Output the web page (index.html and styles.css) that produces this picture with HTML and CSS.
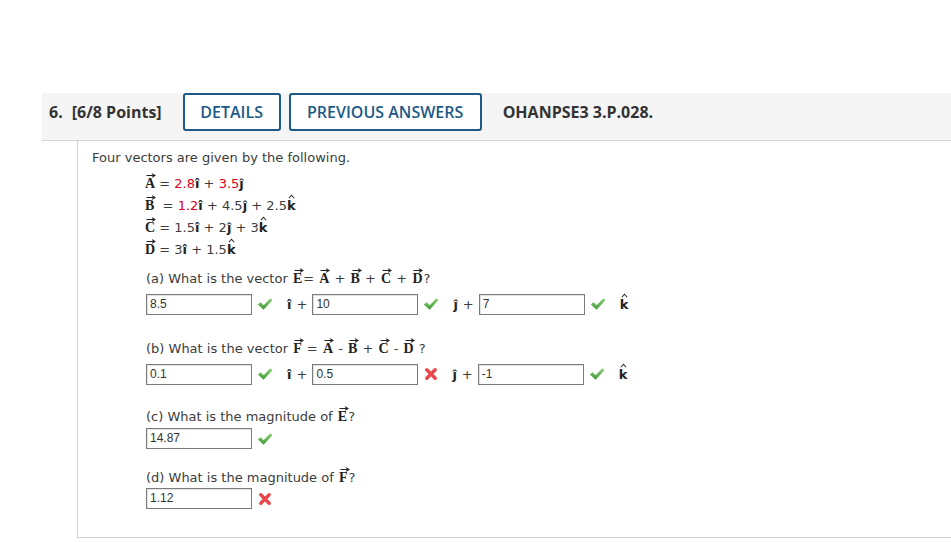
FILE: index.html
```
<!DOCTYPE html>
<html>
<head>
<meta charset="utf-8">
<link rel="stylesheet" href="styles.css">
</head>
<body>
<div class="page">
  <div class="qhead">
    <span class="qnum">6.</span>
    <span class="pts">[6/8 Points]</span>
    <span class="btn btn-details">DETAILS</span>
    <span class="btn btn-prev">PREVIOUS ANSWERS</span>
    <span class="code">OHANPSE3 3.P.028.</span>
  </div>
  <div class="qbody">
    <p class="intro">Four vectors are given by the following.</p>
    <div class="vecs">
      <div class="vline"><span class="vec">A<svg class="arr" viewBox="0 0 10 5"><path d="M0.5 2.5H8.5M6 0.6L9 2.5L6 4.4" /></svg></span> = <span class="red">2.8</span><b class="u">î</b> + <span class="red">3.5</span><b class="u">ĵ</b></div>
      <div class="vline"><span class="vec">B<svg class="arr" viewBox="0 0 10 5"><path d="M0.5 2.5H8.5M6 0.6L9 2.5L6 4.4" /></svg></span>&nbsp; = <span class="red">1.2</span><b class="u">î</b> + 4.5<b class="u">ĵ</b> + 2.5<b class="u kh">k<svg class="hat" viewBox="0 0 8 5"><path d="M1 4.5L4 1L7 4.5" /></svg></b></div>
      <div class="vline"><span class="vec">C<svg class="arr" viewBox="0 0 10 5"><path d="M0.5 2.5H8.5M6 0.6L9 2.5L6 4.4" /></svg></span> = 1.5<b class="u">î</b> + 2<b class="u">ĵ</b> + 3<b class="u kh">k<svg class="hat" viewBox="0 0 8 5"><path d="M1 4.5L4 1L7 4.5" /></svg></b></div>
      <div class="vline"><span class="vec">D<svg class="arr" viewBox="0 0 10 5"><path d="M0.5 2.5H8.5M6 0.6L9 2.5L6 4.4" /></svg></span> = 3<b class="u">î</b> + 1.5<b class="u kh">k<svg class="hat" viewBox="0 0 8 5"><path d="M1 4.5L4 1L7 4.5" /></svg></b></div>
    </div>

    <p class="q qa">(a) What is the vector <span class="vec">E<svg class="arr" viewBox="0 0 10 5"><path d="M0.5 2.5H8.5M6 0.6L9 2.5L6 4.4" /></svg></span>= <span class="vec">A<svg class="arr" viewBox="0 0 10 5"><path d="M0.5 2.5H8.5M6 0.6L9 2.5L6 4.4" /></svg></span> + <span class="vec">B<svg class="arr" viewBox="0 0 10 5"><path d="M0.5 2.5H8.5M6 0.6L9 2.5L6 4.4" /></svg></span> + <span class="vec">C<svg class="arr" viewBox="0 0 10 5"><path d="M0.5 2.5H8.5M6 0.6L9 2.5L6 4.4" /></svg></span> + <span class="vec">D<svg class="arr" viewBox="0 0 10 5"><path d="M0.5 2.5H8.5M6 0.6L9 2.5L6 4.4" /></svg></span>?</p>
    <div class="row row-a">
      <span class="inp">8.5</span>
      <svg class="ok" viewBox="0 0 16 14"><defs><linearGradient id="g1" x1="0" y1="0" x2="0" y2="1"><stop offset="0" stop-color="#8fd07c"/><stop offset="1" stop-color="#3f9a35"/></linearGradient></defs><path d="M0.8 7.6L3.6 5.2L6.6 8.2L13.3 1.2L15.4 3.2L6.6 12.8Z" fill="url(#g1)"/></svg>
      <span class="unit">î</span><span class="plus">+</span>
      <span class="inp">10</span>
      <svg class="ok" viewBox="0 0 16 14"><path d="M0.8 7.6L3.6 5.2L6.6 8.2L13.3 1.2L15.4 3.2L6.6 12.8Z" fill="url(#g1)"/></svg>
      <span class="unit">ĵ</span><span class="plus">+</span>
      <span class="inp">7</span>
      <svg class="ok" viewBox="0 0 16 14"><path d="M0.8 7.6L3.6 5.2L6.6 8.2L13.3 1.2L15.4 3.2L6.6 12.8Z" fill="url(#g1)"/></svg>
      <span class="unit kh">k<svg class="hat" viewBox="0 0 8 5"><path d="M1 4.5L4 1L7 4.5" /></svg></span>
    </div>

    <p class="q qb">(b) What is the vector <span class="vec">F<svg class="arr" viewBox="0 0 10 5"><path d="M0.5 2.5H8.5M6 0.6L9 2.5L6 4.4" /></svg></span> = <span class="vec">A<svg class="arr" viewBox="0 0 10 5"><path d="M0.5 2.5H8.5M6 0.6L9 2.5L6 4.4" /></svg></span> - <span class="vec">B<svg class="arr" viewBox="0 0 10 5"><path d="M0.5 2.5H8.5M6 0.6L9 2.5L6 4.4" /></svg></span> + <span class="vec">C<svg class="arr" viewBox="0 0 10 5"><path d="M0.5 2.5H8.5M6 0.6L9 2.5L6 4.4" /></svg></span> - <span class="vec">D<svg class="arr" viewBox="0 0 10 5"><path d="M0.5 2.5H8.5M6 0.6L9 2.5L6 4.4" /></svg></span> ?</p>
    <div class="row row-b">
      <span class="inp">0.1</span>
      <svg class="ok" viewBox="0 0 16 14"><path d="M0.8 7.6L3.6 5.2L6.6 8.2L13.3 1.2L15.4 3.2L6.6 12.8Z" fill="url(#g1)"/></svg>
      <span class="unit">î</span><span class="plus">+</span>
      <span class="inp">0.5</span>
      <svg class="bad" viewBox="0 0 14 14"><path d="M2.8 2.8L11.2 11.2M11.2 2.8L2.8 11.2"/></svg>
      <span class="unit">ĵ</span><span class="plus">+</span>
      <span class="inp">-1</span>
      <svg class="ok" viewBox="0 0 16 14"><path d="M0.8 7.6L3.6 5.2L6.6 8.2L13.3 1.2L15.4 3.2L6.6 12.8Z" fill="url(#g1)"/></svg>
      <span class="unit kh">k<svg class="hat" viewBox="0 0 8 5"><path d="M1 4.5L4 1L7 4.5" /></svg></span>
    </div>

    <p class="q qc">(c) What is the magnitude of <span class="vec">E<svg class="arr" viewBox="0 0 10 5"><path d="M0.5 2.5H8.5M6 0.6L9 2.5L6 4.4" /></svg></span>?</p>
    <div class="row row-c">
      <span class="inp">14.87</span>
      <svg class="ok" viewBox="0 0 16 14"><path d="M0.8 7.6L3.6 5.2L6.6 8.2L13.3 1.2L15.4 3.2L6.6 12.8Z" fill="url(#g1)"/></svg>
    </div>

    <p class="q qd">(d) What is the magnitude of <span class="vec">F<svg class="arr" viewBox="0 0 10 5"><path d="M0.5 2.5H8.5M6 0.6L9 2.5L6 4.4" /></svg></span>?</p>
    <div class="row row-d">
      <span class="inp">1.12</span>
      <svg class="bad" viewBox="0 0 14 14"><path d="M2.8 2.8L11.2 11.2M11.2 2.8L2.8 11.2"/></svg>
    </div>
  </div>
</div>
</body>
</html>
```

FILE: styles.css
```
* { box-sizing: border-box; }
html, body { margin: 0; padding: 0; background: #fff; }
body { width: 951px; height: 542px; overflow: hidden; }

.page { padding-top: 93px; padding-left: 42px; }

.qhead {
  height: 48px;
  background: #f5f5f5;
  border-bottom: 1px solid #d6d6d6;
  display: flex;
  align-items: flex-start;
  font-family: "Open Sans", sans-serif;
  font-weight: 700;
  font-size: 16px;
  color: #333;
}
.qnum { margin-left: 7px; margin-top: 8px; line-height: 22px; }
.pts { margin-left: 9px; margin-top: 8px; line-height: 22px; }
.btn {
  height: 38px;
  border: 2px solid #1d5a88;
  border-radius: 3px;
  background: #fff;
  color: #1d5a88;
  font-weight: 600;
  display: flex;
  align-items: center;
  justify-content: center;
  padding: 0;
}
.btn-details { margin-left: 21px; width: 98px; }
.btn-prev { margin-left: 8px; width: 193px; }
.code { margin-left: 21px; margin-top: 8px; line-height: 22px; }

.qbody {
  margin-left: 35px;
  height: 397px;
  border-left: 1px solid #cfcfcf;
  border-bottom: 1px solid #cfcfcf;
  padding-left: 14px;
  padding-top: 9px;
  font-family: "DejaVu Sans", Verdana, sans-serif;
  font-size: 13px;
  color: #3c3c3c;
}
p { margin: 0; }
.intro { line-height: 16px; }
.vecs { margin-top: 7px; margin-left: 53px; }
.vline { line-height: 22px; height: 22px; white-space: nowrap; }
.red { color: #e0001b; }
.u { font-family: "DejaVu Sans", sans-serif; font-weight: 700; color: #222; }

.vec {
  position: relative;
  display: inline-block;
  font-family: "Liberation Serif", serif;
  font-weight: 700;
  font-size: 14px;
  line-height: 14px;
  color: #222;
}
.q .vec { margin: 0 1px; }
.arr {
  position: absolute;
  left: 1px;
  top: -4px;
  width: 10px;
  height: 5px;
  fill: none;
  stroke: #222;
  stroke-width: 1.1;
}
.kh { position: relative; display: inline-block; line-height: 13px; }
.hat {
  position: absolute;
  left: 1px;
  top: -5px;
  width: 7px;
  height: 5px;
  fill: none;
  stroke: #222;
  stroke-width: 1.2;
}

.q { line-height: 16px; white-space: nowrap; margin-left: 54px; }
.qa { margin-top: 10px; }
.qb { margin-top: 26px; }
.qc { margin-top: 24px; }
.qd { margin-top: 21px; }

.row { display: flex; align-items: center; margin-left: 54px; height: 22px; }
.row-a { margin-top: 6px; }
.row-b { margin-top: 6px; }
.row-c { margin-top: 3px; height: 21px; }
.row-d { margin-top: 2px; height: 21px; }

.inp {
  width: 106px;
  height: 21px;
  border: 1px solid #7b7b7b;
  box-shadow: inset 1px 1px 0 #e2e2e2;
  font-family: "Liberation Sans", Arial, sans-serif;
  font-size: 12px;
  color: #333;
  line-height: 19px;
  padding-left: 3px;
  background: #fff;
}
.ok { width: 16px; height: 14px; margin-left: 5px; }
.bad {
  width: 14px; height: 14px; margin-left: 6px;
  fill: none; stroke: #e8474c; stroke-width: 3.4; stroke-linecap: round;
}
.unit {
  font-family: "DejaVu Sans", sans-serif;
  font-weight: 700;
  color: #222;
  margin-left: 14px;
}
.plus { margin-left: 5px; margin-right: 5px; }
.row .kh { margin-left: 14px; }
```
